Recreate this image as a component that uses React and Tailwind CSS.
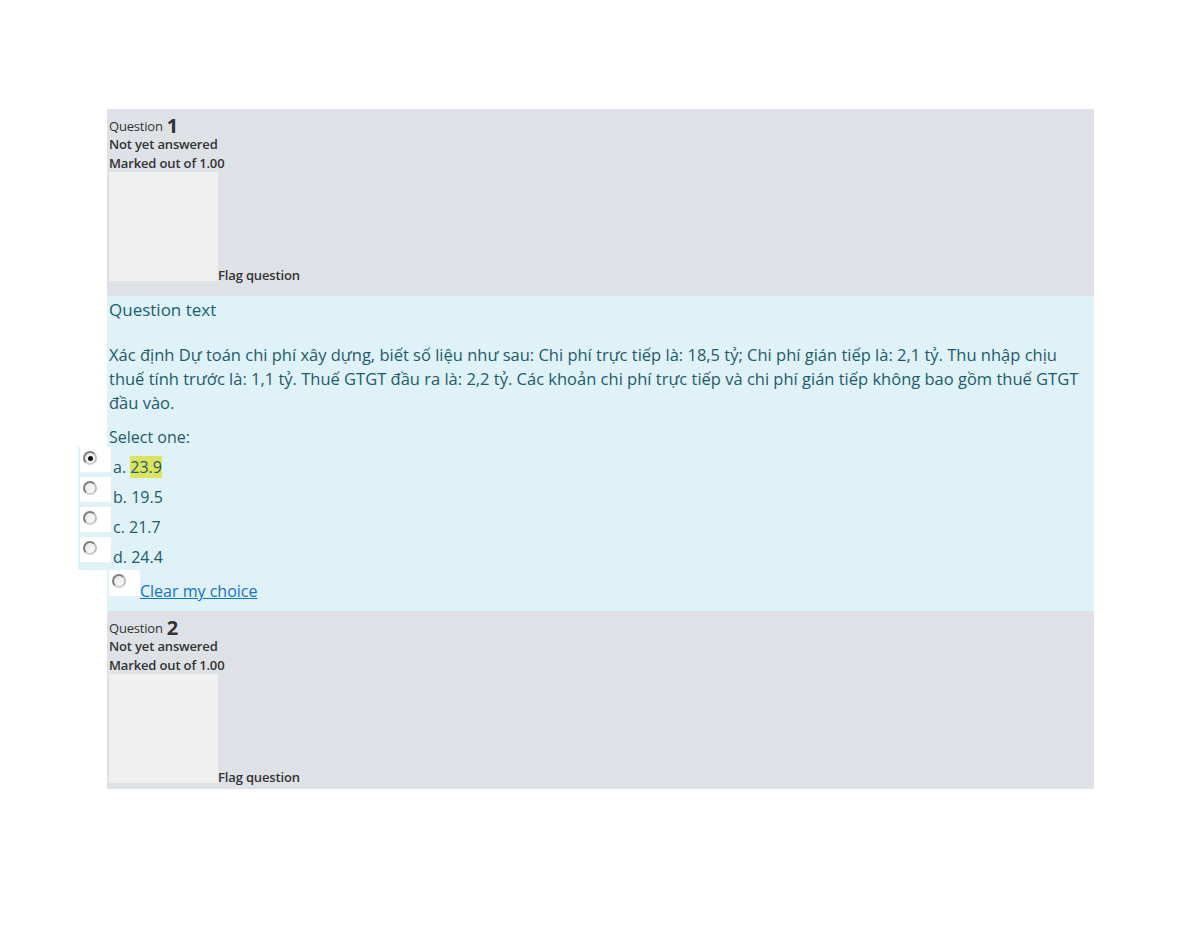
import React from "react";

const options = [
  { letter: "a.", value: "23.9", checked: true },
  { letter: "b.", value: "19.5" },
  { letter: "c.", value: "21.7" },
  { letter: "d.", value: "24.4" },
];

const Radio = ({ checked }) => (
  <span className="flex h-[14px] w-[14px] items-center justify-center rounded-full border-2 border-[#7e7e7e] border-b-[#cfcfcf] border-r-[#bdbdbd] bg-gradient-to-br from-[#e4e4e4] to-white">
    {checked && <span className="h-[5px] w-[5px] rounded-full bg-[#111]" />}
  </span>
);

const QuestionHeader = ({ number, bottom }) => (
  <div className={`bg-[#dee2e6] pl-[2px] pt-[5px] text-[#333] ${bottom}`}>
    <div className="flex h-[21px] items-end gap-[4px]">
      <span className="text-[13px] leading-[17px] tracking-[-0.2px]">Question</span>
      <span className="text-[20px] font-bold leading-[19px]">{number}</span>
    </div>
    <div className="h-[19px] text-[13px] font-semibold leading-[19px] tracking-[-0.15px]">
      Not yet answered
    </div>
    <div className="h-[18px] text-[13px] font-semibold leading-[18px] tracking-[-0.15px]">
      Marked out of 1.00
    </div>
    <div className="flex items-end">
      <div className="h-[109px] w-[109px] bg-[#f0f0f0]" />
      <span className="-mb-[2px] text-[13px] font-semibold leading-[15px] tracking-[-0.15px]">
        Flag question
      </span>
    </div>
  </div>
);

export default function App() {
  return (
    <div
      className="min-h-[927px] bg-white pt-[109px]"
      style={{ fontFamily: '"Open Sans", "Noto Sans", sans-serif' }}
    >
      <div className="ml-[107px] w-[987px]">
        <QuestionHeader number="1" bottom="pb-[15px]" />

        <div className="h-[315px] bg-[#def2f8] pl-[2px] pt-[2px] text-[#1f5b6a]">
          <div className="text-[17px] leading-[24px] text-[#18606f]">Question text</div>
          <p className="mt-[21px] text-[16.5px] leading-[24px]">
            Xác định Dự toán chi phí xây dựng, biết số liệu như sau: Chi phí trực tiếp là: 18,5 tỷ; Chi phí gián tiếp là: 2,1 tỷ. Thu nhập chịu thuế tính trước là: 1,1 tỷ. Thuế GTGT đầu ra là: 2,2 tỷ. Các khoản chi phí trực tiếp và chi phí gián tiếp không bao gồm thuế GTGT đầu vào.
          </p>
          <div className="mt-[10px] text-[16px] leading-[24px]">Select one:</div>

          <div className="-ml-[31px] -mt-[2px] w-[200px] bg-[#def2f8] pb-[3px]">
            {options.map((o) => (
              <div key={o.letter} className="flex h-[30px] items-start">
                <div className="ml-[2px] h-[25px] w-[31px] bg-white pl-[3px] pt-[4px]">
                  <Radio checked={o.checked} />
                </div>
                <div className="pl-[2px] pt-[8px] text-[16px] leading-[24px]">
                  {o.letter}{" "}
                  <span className={o.checked ? "bg-[#dbe45c]" : ""}>{o.value}</span>
                </div>
              </div>
            ))}
          </div>
          <div className="flex h-[30px] items-start">
            <div className="h-[26px] w-[31px] bg-white pl-[3px] pt-[4px]">
              <Radio />
            </div>
            <a
              href="#"
              className="pt-[9px] text-[16px] leading-[24px] text-[#1173cf] underline"
            >
              Clear my choice
            </a>
          </div>
        </div>

        <QuestionHeader number="2" bottom="pb-[6px]" />
      </div>
    </div>
  );
}
